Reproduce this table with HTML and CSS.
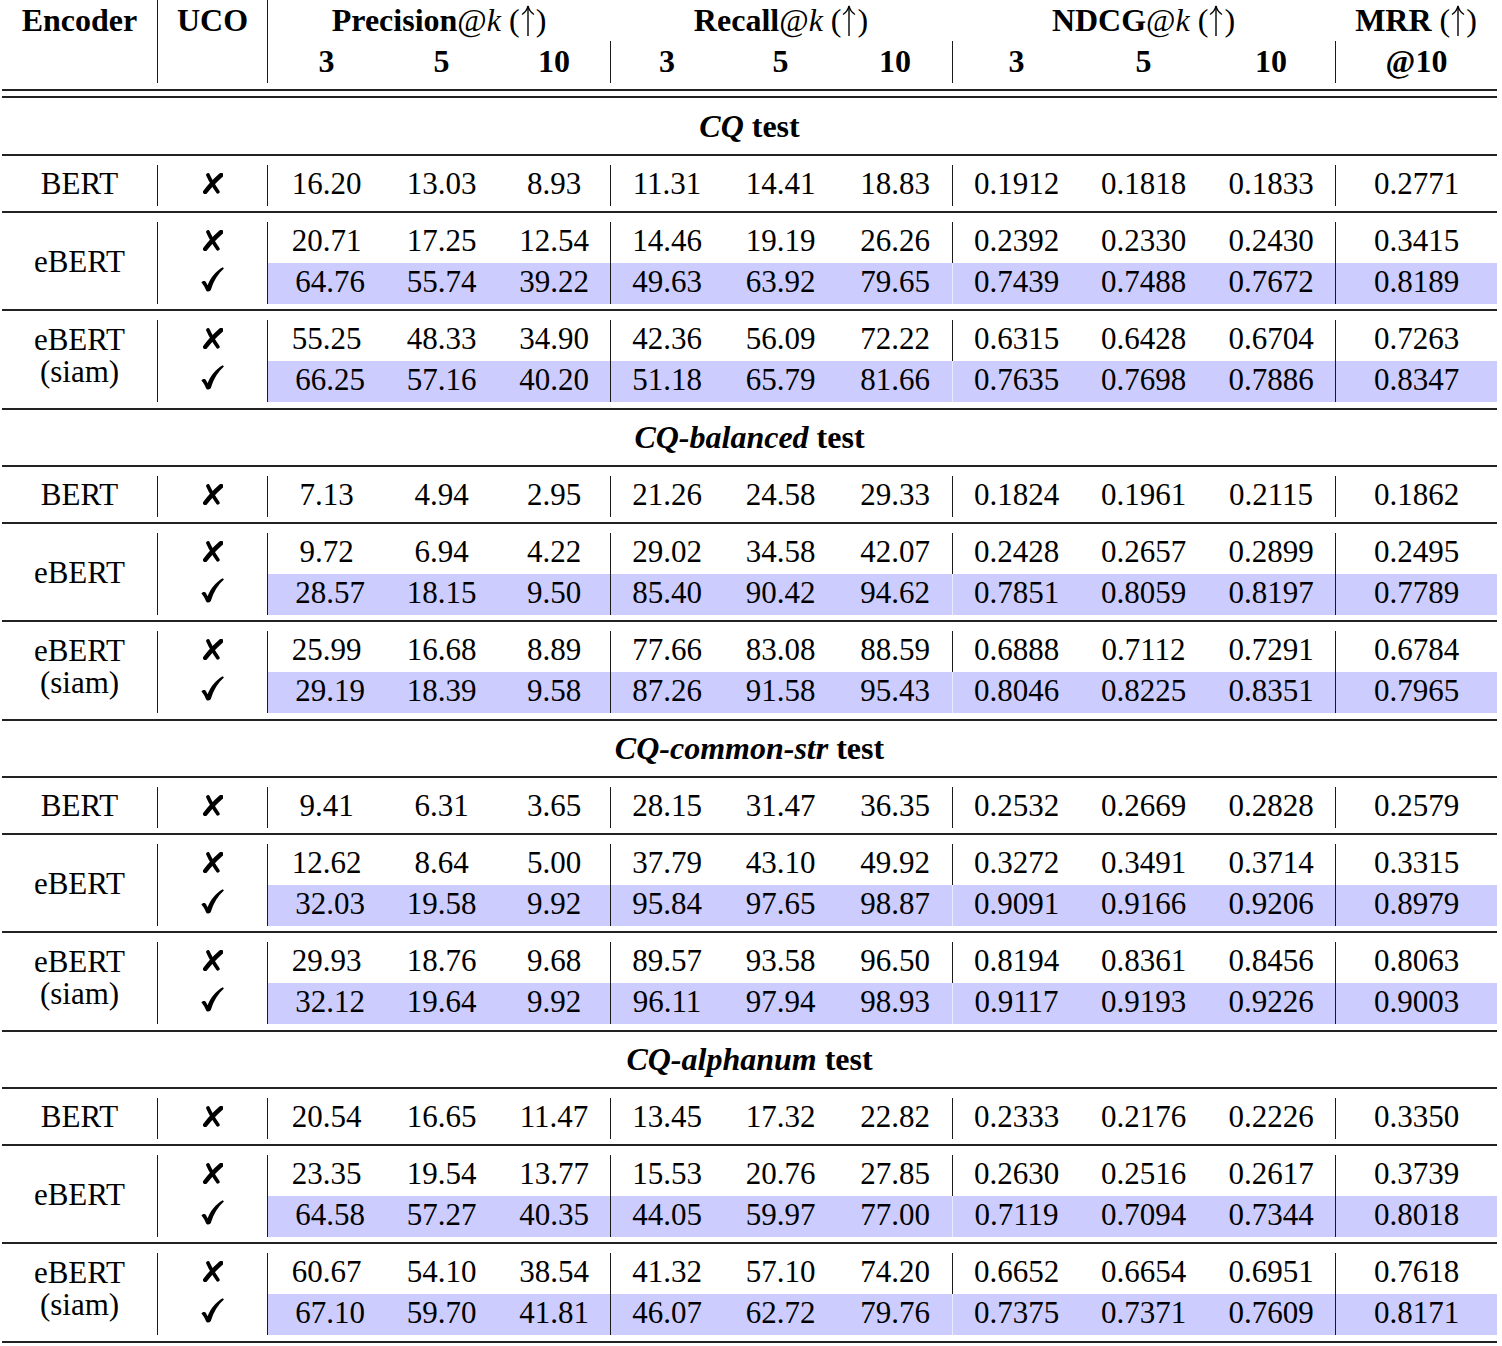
FILE: index.html
```html
<!DOCTYPE html>
<html>
<head>
<meta charset="utf-8">
<link rel="stylesheet" href="styles.css">
</head>
<body>
<svg class="defs" width="0" height="0" aria-hidden="true">
  <symbol id="ix" viewBox="0 0 20 21">
    <path d="M5 2 C7 6.5 10.2 12.2 14.8 18.8" fill="none" stroke="#000" stroke-width="3.7" stroke-linecap="round"/>
    <path d="M18.2 2 C12 7.5 6.5 13.2 2.2 19" fill="none" stroke="#000" stroke-width="4.5" stroke-linecap="round"/>
  </symbol>
  <symbol id="ick" viewBox="0 0 23 25">
    <path d="M0.4 15.6 C1.4 13.6 4 13.4 5.2 15.4 L6.6 18.2 C9.6 10.6 14.6 4.2 21.8 0.2 L22.9 1.6 C17 7 12.6 14 9.8 23 C9.1 24.8 5.7 24.9 5 23.2 C3.8 20.4 2.4 17.8 0.4 15.6 Z" fill="#000"/>
  </symbol>
  <symbol id="iup" viewBox="0 0 14 31">
    <path d="M7 1.5 V31" fill="none" stroke="#000" stroke-width="1.4"/>
    <path d="M1 9.5 C3.8 7.8 6 5 7 1 C8 5 10.2 7.8 13 9.5" fill="none" stroke="#000" stroke-width="1.3"/>
  </symbol>
</svg>

<div class="table">
  <div class="grid head">
    <div class="h-enc">Encoder</div>
    <div class="h-uco vl">UCO</div>
    <div class="gt vl"><b>Precision</b><span class="m">@<i>k</i> (<svg class="up"><use href="#iup"/></svg>)</span></div>
    <div class="gt"><b>Recall</b><span class="m">@<i>k</i> (<svg class="up"><use href="#iup"/></svg>)</span></div>
    <div class="gt"><b>NDCG</b><span class="m">@<i>k</i> (<svg class="up"><use href="#iup"/></svg>)</span></div>
    <div class="gt-m"><b>MRR</b><span class="m"> (<svg class="up"><use href="#iup"/></svg>)</span></div>
    <div class="k vl">3</div><div class="k">5</div><div class="k">10</div>
    <div class="k vl">3</div><div class="k">5</div><div class="k">10</div>
    <div class="k vl">3</div><div class="k">5</div><div class="k">10</div>
    <div class="k vl">@10</div>
  </div>
  <div class="dbl"></div>

  <!-- CQ test -->
  <div class="sec first"><i>CQ</i> test</div>
  <div class="grid blk one">
    <div class="lbl">BERT</div>
    <div class="mk vl"><svg class="sx"><use href="#ix"/></svg></div>
    <div class="n vl">16.20</div><div class="n">13.03</div><div class="n">8.93</div>
    <div class="n vl">11.31</div><div class="n">14.41</div><div class="n">18.83</div>
    <div class="n vl">0.1912</div><div class="n">0.1818</div><div class="n">0.1833</div>
    <div class="n vl">0.2771</div>
  </div>
  <div class="grid blk two">
    <div class="lbl">eBERT</div>
    <div class="mk vl"><svg class="sx"><use href="#ix"/></svg></div>
    <div class="n vl">20.71</div><div class="n">17.25</div><div class="n">12.54</div>
    <div class="n vl">14.46</div><div class="n">19.19</div><div class="n">26.26</div>
    <div class="n vl">0.2392</div><div class="n">0.2330</div><div class="n">0.2430</div>
    <div class="n vl">0.3415</div>
    <div class="mk vl"><svg class="sc"><use href="#ick"/></svg></div>
    <div class="n vl hl sh">64.76</div><div class="n hl">55.74</div><div class="n hl">39.22</div>
    <div class="n vl hl">49.63</div><div class="n hl">63.92</div><div class="n hl">79.65</div>
    <div class="n vl hl faint">0.7439</div><div class="n hl">0.7488</div><div class="n hl">0.7672</div>
    <div class="n vl hl">0.8189</div>
  </div>
  <div class="grid blk two siam">
    <div class="lbl dbl-lbl">eBERT<br>(siam)</div>
    <div class="mk vl"><svg class="sx"><use href="#ix"/></svg></div>
    <div class="n vl">55.25</div><div class="n">48.33</div><div class="n">34.90</div>
    <div class="n vl">42.36</div><div class="n">56.09</div><div class="n">72.22</div>
    <div class="n vl">0.6315</div><div class="n">0.6428</div><div class="n">0.6704</div>
    <div class="n vl">0.7263</div>
    <div class="mk vl"><svg class="sc"><use href="#ick"/></svg></div>
    <div class="n vl hl sh">66.25</div><div class="n hl">57.16</div><div class="n hl">40.20</div>
    <div class="n vl hl">51.18</div><div class="n hl">65.79</div><div class="n hl">81.66</div>
    <div class="n vl hl faint">0.7635</div><div class="n hl">0.7698</div><div class="n hl">0.7886</div>
    <div class="n vl hl">0.8347</div>
  </div>

  <!-- CQ-balanced test -->
  <div class="sec"><i>CQ-balanced</i> test</div>
  <div class="grid blk one">
    <div class="lbl">BERT</div>
    <div class="mk vl"><svg class="sx"><use href="#ix"/></svg></div>
    <div class="n vl">7.13</div><div class="n">4.94</div><div class="n">2.95</div>
    <div class="n vl">21.26</div><div class="n">24.58</div><div class="n">29.33</div>
    <div class="n vl">0.1824</div><div class="n">0.1961</div><div class="n">0.2115</div>
    <div class="n vl">0.1862</div>
  </div>
  <div class="grid blk two">
    <div class="lbl">eBERT</div>
    <div class="mk vl"><svg class="sx"><use href="#ix"/></svg></div>
    <div class="n vl">9.72</div><div class="n">6.94</div><div class="n">4.22</div>
    <div class="n vl">29.02</div><div class="n">34.58</div><div class="n">42.07</div>
    <div class="n vl">0.2428</div><div class="n">0.2657</div><div class="n">0.2899</div>
    <div class="n vl">0.2495</div>
    <div class="mk vl"><svg class="sc"><use href="#ick"/></svg></div>
    <div class="n vl hl sh">28.57</div><div class="n hl">18.15</div><div class="n hl">9.50</div>
    <div class="n vl hl">85.40</div><div class="n hl">90.42</div><div class="n hl">94.62</div>
    <div class="n vl hl faint">0.7851</div><div class="n hl">0.8059</div><div class="n hl">0.8197</div>
    <div class="n vl hl">0.7789</div>
  </div>
  <div class="grid blk two siam">
    <div class="lbl dbl-lbl">eBERT<br>(siam)</div>
    <div class="mk vl"><svg class="sx"><use href="#ix"/></svg></div>
    <div class="n vl">25.99</div><div class="n">16.68</div><div class="n">8.89</div>
    <div class="n vl">77.66</div><div class="n">83.08</div><div class="n">88.59</div>
    <div class="n vl">0.6888</div><div class="n">0.7112</div><div class="n">0.7291</div>
    <div class="n vl">0.6784</div>
    <div class="mk vl"><svg class="sc"><use href="#ick"/></svg></div>
    <div class="n vl hl sh">29.19</div><div class="n hl">18.39</div><div class="n hl">9.58</div>
    <div class="n vl hl">87.26</div><div class="n hl">91.58</div><div class="n hl">95.43</div>
    <div class="n vl hl faint">0.8046</div><div class="n hl">0.8225</div><div class="n hl">0.8351</div>
    <div class="n vl hl">0.7965</div>
  </div>

  <!-- CQ-common-str test -->
  <div class="sec"><i>CQ-common-str</i> test</div>
  <div class="grid blk one">
    <div class="lbl">BERT</div>
    <div class="mk vl"><svg class="sx"><use href="#ix"/></svg></div>
    <div class="n vl">9.41</div><div class="n">6.31</div><div class="n">3.65</div>
    <div class="n vl">28.15</div><div class="n">31.47</div><div class="n">36.35</div>
    <div class="n vl">0.2532</div><div class="n">0.2669</div><div class="n">0.2828</div>
    <div class="n vl">0.2579</div>
  </div>
  <div class="grid blk two">
    <div class="lbl">eBERT</div>
    <div class="mk vl"><svg class="sx"><use href="#ix"/></svg></div>
    <div class="n vl">12.62</div><div class="n">8.64</div><div class="n">5.00</div>
    <div class="n vl">37.79</div><div class="n">43.10</div><div class="n">49.92</div>
    <div class="n vl">0.3272</div><div class="n">0.3491</div><div class="n">0.3714</div>
    <div class="n vl">0.3315</div>
    <div class="mk vl"><svg class="sc"><use href="#ick"/></svg></div>
    <div class="n vl hl sh">32.03</div><div class="n hl">19.58</div><div class="n hl">9.92</div>
    <div class="n vl hl">95.84</div><div class="n hl">97.65</div><div class="n hl">98.87</div>
    <div class="n vl hl faint">0.9091</div><div class="n hl">0.9166</div><div class="n hl">0.9206</div>
    <div class="n vl hl">0.8979</div>
  </div>
  <div class="grid blk two siam">
    <div class="lbl dbl-lbl">eBERT<br>(siam)</div>
    <div class="mk vl"><svg class="sx"><use href="#ix"/></svg></div>
    <div class="n vl">29.93</div><div class="n">18.76</div><div class="n">9.68</div>
    <div class="n vl">89.57</div><div class="n">93.58</div><div class="n">96.50</div>
    <div class="n vl">0.8194</div><div class="n">0.8361</div><div class="n">0.8456</div>
    <div class="n vl">0.8063</div>
    <div class="mk vl"><svg class="sc"><use href="#ick"/></svg></div>
    <div class="n vl hl sh">32.12</div><div class="n hl">19.64</div><div class="n hl">9.92</div>
    <div class="n vl hl">96.11</div><div class="n hl">97.94</div><div class="n hl">98.93</div>
    <div class="n vl hl faint">0.9117</div><div class="n hl">0.9193</div><div class="n hl">0.9226</div>
    <div class="n vl hl">0.9003</div>
  </div>

  <!-- CQ-alphanum test -->
  <div class="sec"><i>CQ-alphanum</i> test</div>
  <div class="grid blk one">
    <div class="lbl">BERT</div>
    <div class="mk vl"><svg class="sx"><use href="#ix"/></svg></div>
    <div class="n vl">20.54</div><div class="n">16.65</div><div class="n">11.47</div>
    <div class="n vl">13.45</div><div class="n">17.32</div><div class="n">22.82</div>
    <div class="n vl">0.2333</div><div class="n">0.2176</div><div class="n">0.2226</div>
    <div class="n vl">0.3350</div>
  </div>
  <div class="grid blk two">
    <div class="lbl">eBERT</div>
    <div class="mk vl"><svg class="sx"><use href="#ix"/></svg></div>
    <div class="n vl">23.35</div><div class="n">19.54</div><div class="n">13.77</div>
    <div class="n vl">15.53</div><div class="n">20.76</div><div class="n">27.85</div>
    <div class="n vl">0.2630</div><div class="n">0.2516</div><div class="n">0.2617</div>
    <div class="n vl">0.3739</div>
    <div class="mk vl"><svg class="sc"><use href="#ick"/></svg></div>
    <div class="n vl hl sh">64.58</div><div class="n hl">57.27</div><div class="n hl">40.35</div>
    <div class="n vl hl">44.05</div><div class="n hl">59.97</div><div class="n hl">77.00</div>
    <div class="n vl hl faint">0.7119</div><div class="n hl">0.7094</div><div class="n hl">0.7344</div>
    <div class="n vl hl">0.8018</div>
  </div>
  <div class="grid blk two siam">
    <div class="lbl dbl-lbl">eBERT<br>(siam)</div>
    <div class="mk vl"><svg class="sx"><use href="#ix"/></svg></div>
    <div class="n vl">60.67</div><div class="n">54.10</div><div class="n">38.54</div>
    <div class="n vl">41.32</div><div class="n">57.10</div><div class="n">74.20</div>
    <div class="n vl">0.6652</div><div class="n">0.6654</div><div class="n">0.6951</div>
    <div class="n vl">0.7618</div>
    <div class="mk vl"><svg class="sc"><use href="#ick"/></svg></div>
    <div class="n vl hl sh">67.10</div><div class="n hl">59.70</div><div class="n hl">41.81</div>
    <div class="n vl hl">46.07</div><div class="n hl">62.72</div><div class="n hl">79.76</div>
    <div class="n vl hl faint">0.7375</div><div class="n hl">0.7371</div><div class="n hl">0.7609</div>
    <div class="n vl hl">0.8171</div>
  </div>
</div>
</body>
</html>
```

FILE: styles.css
```css
* { box-sizing: border-box; }

body {
  margin: 0;
  background: #ffffff;
  color: #000000;
  font-family: "Liberation Serif", "Times New Roman", serif;
}

.defs { position: absolute; width: 0; height: 0; overflow: hidden; }

.table {
  margin-left: 2px;
  width: 1495px;
}

.grid {
  display: grid;
  grid-template-columns: 155px 110px 118px 113px 112px 113px 115px 114px 128px 127px 128px 162px;
}

.vl { border-left: 1px solid #1a1a1a; }

/* header */
.head {
  grid-template-rows: 41px 42px;
  padding-bottom: 6px;
  font-weight: bold;
  font-size: 32px;
  line-height: 41px;
  text-align: center;
}
.h-enc, .h-uco { grid-row: span 2; }
.gt { grid-column: span 3; white-space: nowrap; }
.gt-m { white-space: nowrap; }
.m { font-weight: normal; }
.m i { font-style: italic; }
.up {
  display: inline-block;
  width: 14px;
  height: 31px;
  vertical-align: -5px;
  margin: 0 1px;
}

.dbl {
  height: 9px;
  border-top: 2px solid #222;
  border-bottom: 2px solid #222;
}

/* section titles */
.sec {
  height: 57px;
  border-bottom: 2px solid #222;
  font-size: 32px;
  font-weight: bold;
  line-height: 55px;
  text-align: center;
}
.sec.first { height: 58px; line-height: 56px; }
.sec i { font-style: italic; }

/* data blocks */
.blk {
  padding: 9px 0 5px;
  border-bottom: 2px solid #222;
  font-size: 31px;
}
.blk.one { grid-template-rows: 41px; }
.blk.two { grid-template-rows: 41px 41px; }
.blk.siam { padding-bottom: 6px; }

.lbl {
  grid-row: 1 / -1;
  display: flex;
  align-items: center;
  justify-content: center;
  text-align: center;
  line-height: 37px;
  padding-bottom: 4px;
}
.lbl.dbl-lbl {
  align-items: flex-start;
  line-height: 32px;
  padding-top: 4px;
  padding-bottom: 0;
}

.mk {
  display: flex;
  justify-content: center;
  align-items: flex-start;
}
.sx { display: block; width: 20px; height: 21px; margin-top: 8px; margin-left: 1px; }
.sc { display: block; width: 23px; height: 25px; margin-top: 4px; }

.n {
  text-align: center;
  line-height: 37px;
  padding-bottom: 4px;
  white-space: nowrap;
}
.hl { background: #ccccff; }
.sh { padding-left: 7px; }
.vl.faint { border-left-color: #eaeafc; }
```
